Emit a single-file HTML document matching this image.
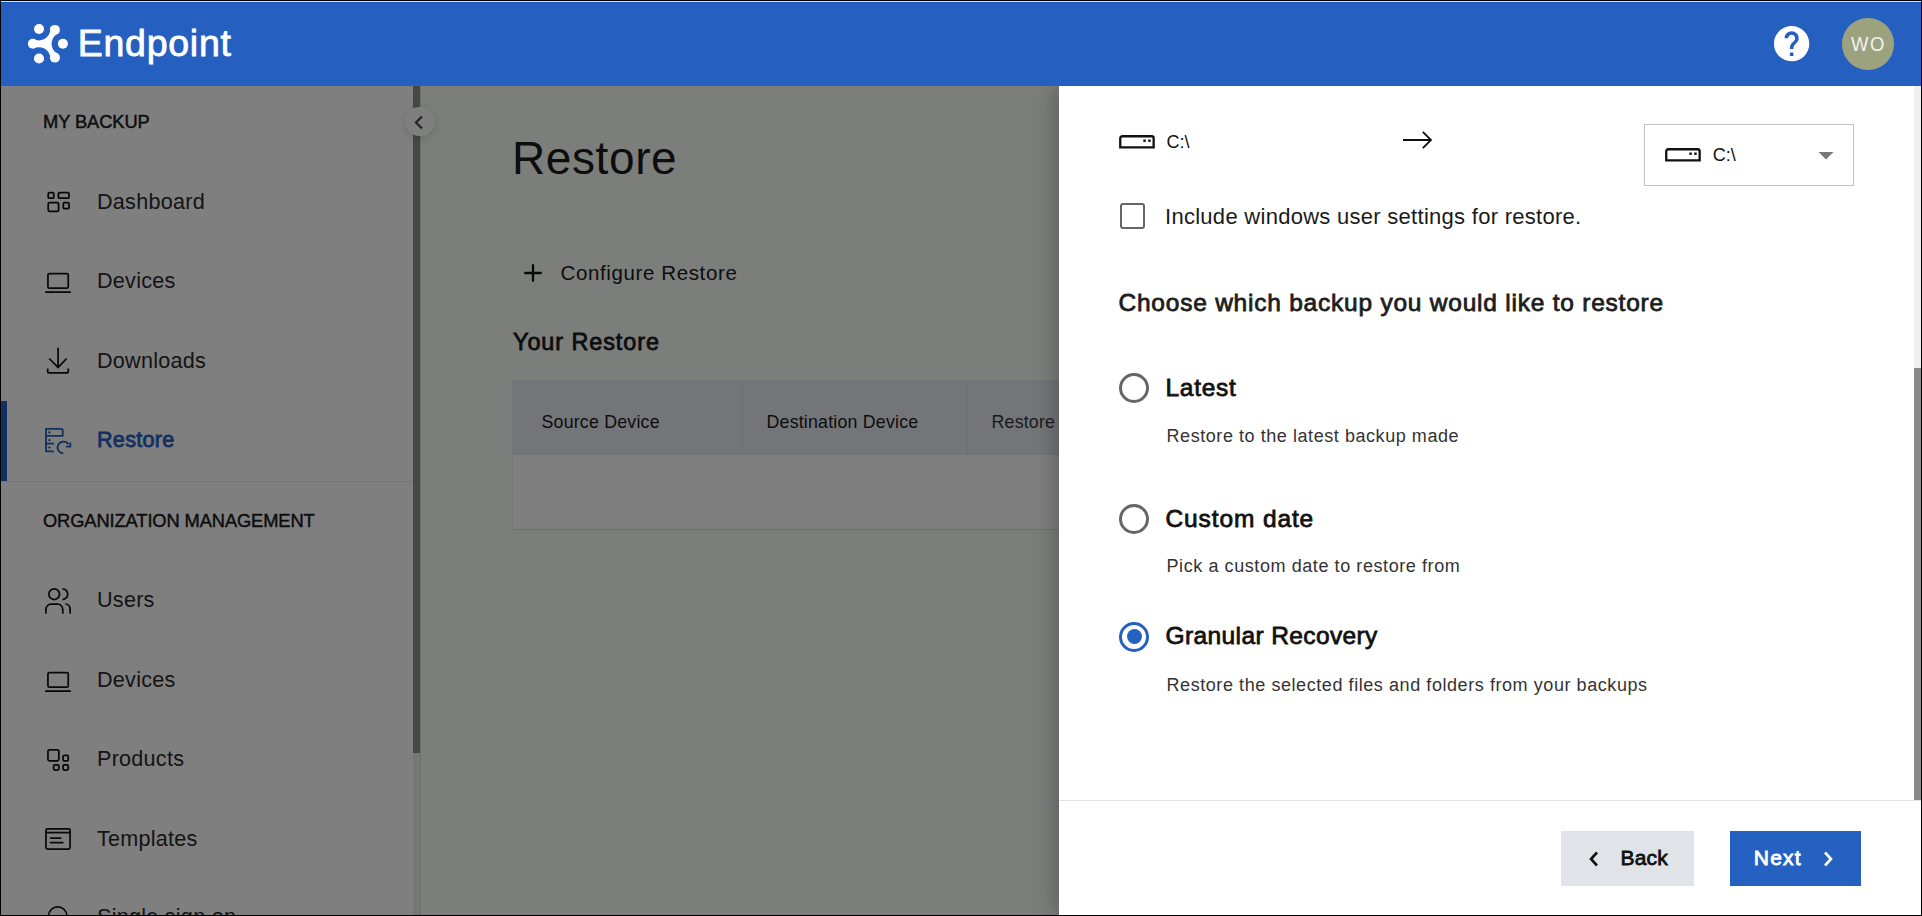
<!DOCTYPE html>
<html><head><meta charset="utf-8"><style>
html,body{margin:0;padding:0;}
body{width:1922px;height:916px;overflow:hidden;position:relative;background:#000;font-family:'Liberation Sans',sans-serif;}
.t{position:absolute;line-height:1;white-space:nowrap;}
.a{position:absolute;}
svg{position:absolute;overflow:visible;}
</style></head><body>
<div class="a" style="left:1px;top:1px;width:1920px;height:914px;background:#fff;overflow:hidden"></div>
<!-- base page (under overlay) -->
<div class="a" style="left:1px;top:86px;width:1058px;height:829px;background:#f8fcf8"></div>
<div class="a" style="left:1px;top:86px;width:412px;height:829px;background:#fff"></div>
<div class="a" style="left:1px;top:481px;width:412px;height:1px;background:#e8e8e8"></div>
<div class="a" style="left:1px;top:401px;width:6px;height:80px;background:#2660c2"></div>
<div class="a" style="left:413px;top:86px;width:7px;height:829px;background:#eaf0ec"></div>
<div class="a" style="left:420px;top:86px;width:1px;height:829px;background:#dde1dd"></div>
<div class="a" style="left:413px;top:86px;width:7px;height:667px;background:#8e8e8e"></div>
<!-- table -->
<div class="a" style="left:512px;top:380px;width:560px;height:75px;background:#e6ebf2"></div>
<div class="a" style="left:742px;top:380px;width:1px;height:75px;background:#dde2e9"></div>
<div class="a" style="left:967px;top:380px;width:1px;height:75px;background:#dde2e9"></div>
<div class="a" style="left:512px;top:455px;width:560px;height:74px;background:#fff;box-shadow:inset 1px 0 0 #f0f0f0"></div>
<div class="a" style="left:512px;top:529px;width:560px;height:1px;background:#dcdcdc"></div>
<!-- plus -->
<svg width="20" height="20" style="left:523px;top:263px">
  <path d="M10 2.2v15.6M2.2 10h15.6" stroke="#111" stroke-width="2.3" stroke-linecap="round"/>
</svg>
<!-- sidebar icons -->
<svg width="36" height="36" style="left:40px;top:184px" fill="none" stroke="#111" stroke-width="1.75">
  <rect x="8.2" y="8.6" width="5.6" height="5.6" rx="1.3"/>
  <rect x="18.4" y="8.6" width="10.6" height="5.6" rx="1.3"/>
  <rect x="8.2" y="18.6" width="10.4" height="8.8" rx="1.3"/>
  <rect x="23.3" y="18.6" width="5.7" height="6.1" rx="1.3"/>
</svg>
<svg width="36" height="36" style="left:40px;top:264px" fill="none" stroke="#111" stroke-width="1.75">
  <rect x="7.95" y="9.65" width="20.3" height="14.5" rx="1.4"/>
  <path d="M5.1 28.1H30.9"/>
</svg>
<svg width="36" height="36" style="left:40px;top:343px" fill="none" stroke="#111" stroke-width="1.75">
  <path d="M18.1 4.7V24M9.2 15.5l8.9 8.9 8.6-8.9M7.7 25.4v2.8a1.7 1.7 0 0 0 1.7 1.7h17.2a1.7 1.7 0 0 0 1.7-1.7v-2.8"/>
</svg>
<svg width="36" height="36" style="left:40px;top:422px" fill="none" stroke="#2660c2" stroke-width="1.8">
  <path d="M6 30.3V6.8h15.2a1.5 1.5 0 0 1 1.5 1.5v5.5H6M6 21.6h8M6 29.4h8"/>
  <path d="M8.2 10.4h2.4M9.4 9.2v2.4M8.2 18.1h2.4M9.4 16.9v2.4M8.2 25.5h2.4M9.4 24.3v2.4" stroke-width="1.1"/>
  <path d="M23.3 31.4A5.9 5.9 0 1 1 28.4 22.3M30.3 20.4v4.2h-4.4"/>
</svg>
<svg width="36" height="36" style="left:40px;top:583px" fill="none" stroke="#111" stroke-width="1.75">
  <circle cx="14.2" cy="11.2" r="5.3"/>
  <path d="M5.9 30.7v-4.2a5.2 5.2 0 0 1 5.2-5.3h6.5a5.2 5.2 0 0 1 5.2 5.3v4.2M22.4 5.9a5.3 5.3 0 0 1 0 10.6M25.4 21a5 5 0 0 1 4.7 5v4.7"/>
</svg>
<svg width="36" height="36" style="left:40px;top:663px" fill="none" stroke="#111" stroke-width="1.75">
  <rect x="7.95" y="9.65" width="20.3" height="14.5" rx="1.4"/>
  <path d="M5.1 28.1H30.9"/>
</svg>
<svg width="36" height="36" style="left:40px;top:742px" fill="none" stroke="#111" stroke-width="1.75">
  <rect x="7.95" y="7.75" width="10.9" height="11.1" rx="1.5"/>
  <rect x="23.05" y="13.45" width="5.2" height="5.4" rx="1.2"/>
  <rect x="13.65" y="22.85" width="5.2" height="5.2" rx="1.2"/>
  <rect x="23.05" y="22.85" width="5.2" height="5.2" rx="1.2"/>
</svg>
<svg width="36" height="36" style="left:40px;top:821px" fill="none" stroke="#111" stroke-width="1.75">
  <rect x="5.95" y="7.75" width="24.1" height="20.3" rx="1.5"/>
  <path d="M5.95 11.6H30.05"/>
  <path d="M10.6 17.1h10.2M10.6 21.6h12.2" stroke-linecap="round"/>
</svg>
<svg width="36" height="36" style="left:40px;top:900px" fill="none" stroke="#111" stroke-width="1.75">
  <path d="M8.5 16a9.2 9.2 0 0 1 18.4 0"/>
</svg>
<div class="t" style="left:43.0px;top:112.8px;font-size:18.30px;font-weight:400;color:#1a1a1a;letter-spacing:-0.07px;-webkit-text-stroke:0.45px #1a1a1a;">MY BACKUP</div><div class="t" style="left:43.0px;top:511.9px;font-size:18.30px;font-weight:400;color:#1a1a1a;letter-spacing:-0.1px;-webkit-text-stroke:0.45px #1a1a1a;">ORGANIZATION MANAGEMENT</div><div class="t" style="left:97.0px;top:191.0px;font-size:21.60px;font-weight:400;color:#2a2a2a;letter-spacing:0.25px;">Dashboard</div><div class="t" style="left:97.0px;top:270.2px;font-size:21.60px;font-weight:400;color:#2a2a2a;letter-spacing:0.25px;">Devices</div><div class="t" style="left:97.0px;top:350.0px;font-size:21.60px;font-weight:400;color:#2a2a2a;letter-spacing:0.25px;">Downloads</div><div class="t" style="left:97.0px;top:429.0px;font-size:21.60px;font-weight:400;color:#2660c2;letter-spacing:0.27px;-webkit-text-stroke:0.8px #2660c2;">Restore</div><div class="t" style="left:97.0px;top:589.1px;font-size:21.60px;font-weight:400;color:#2a2a2a;letter-spacing:0.25px;">Users</div><div class="t" style="left:97.0px;top:669.1px;font-size:21.60px;font-weight:400;color:#2a2a2a;letter-spacing:0.25px;">Devices</div><div class="t" style="left:97.0px;top:748.2px;font-size:21.60px;font-weight:400;color:#2a2a2a;letter-spacing:0.25px;">Products</div><div class="t" style="left:97.0px;top:828.2px;font-size:21.60px;font-weight:400;color:#2a2a2a;letter-spacing:0.25px;">Templates</div><div class="t" style="left:97.0px;top:906.2px;font-size:21.60px;font-weight:400;color:#2a2a2a;letter-spacing:0.25px;">Single sign on</div><div class="t" style="left:512.0px;top:135.4px;font-size:46.00px;font-weight:400;color:#1a1a1a;letter-spacing:0.6px;">Restore</div><div class="t" style="left:560.5px;top:262.6px;font-size:20.50px;font-weight:400;color:#1a1a1a;letter-spacing:0.62px;">Configure Restore</div><div class="t" style="left:513.0px;top:330.7px;font-size:23.40px;font-weight:400;color:#1a1a1a;letter-spacing:0.94px;-webkit-text-stroke:0.8px #1a1a1a;">Your Restore</div><div class="t" style="left:541.5px;top:413.9px;font-size:17.80px;font-weight:400;color:#1a1a1a;letter-spacing:0.2px;">Source Device</div><div class="t" style="left:766.5px;top:413.9px;font-size:17.80px;font-weight:400;color:#1a1a1a;letter-spacing:0.2px;">Destination Device</div>
<!-- collapse button -->
<div class="a" style="left:405.2px;top:106.8px;width:29.4px;height:29.4px;border-radius:50%;background:#fff;box-shadow:0 2px 8px rgba(0,0,0,.15)"></div>
<svg width="12" height="16" style="left:413px;top:113.5px">
  <path d="M9 2.5L3 8.5l6 6" fill="none" stroke="#444" stroke-width="2.2"/>
</svg>

<!-- overlay -->
<div class="a" style="left:1px;top:86px;width:1920px;height:829px;background:rgba(0,0,0,.5)"></div>

<!-- drawer -->
<div class="a" style="left:1059px;top:86px;width:862px;height:829px;background:#fff;box-shadow:-4px 0 20px rgba(0,0,0,.26)"></div>
<div class="a" style="left:1914px;top:86px;width:7px;height:714px;background:#efefef"></div>
<div class="a" style="left:1914px;top:368px;width:7px;height:432px;background:#8a8a8a"></div>
<div class="a" style="left:1059px;top:800px;width:862px;height:1px;background:#e1e4e9"></div>
<!-- drive icons -->
<svg width="40" height="20" style="left:1117px;top:132px">
  <path d="M3.25 15.45V6.25a2 2 0 0 1 2-2h29.4a2 2 0 0 1 2 2v9.2z" fill="none" stroke="#111" stroke-width="2.3"/>
  <rect x="26.3" y="7.5" width="2.5" height="2.4" fill="#111"/><rect x="31.2" y="7.5" width="2.5" height="2.4" fill="#111"/>
</svg>
<svg width="40" height="20" style="left:1663px;top:144.9px">
  <path d="M3.25 15.45V6.25a2 2 0 0 1 2-2h29.4a2 2 0 0 1 2 2v9.2z" fill="none" stroke="#111" stroke-width="2.3"/>
  <rect x="26.3" y="7.5" width="2.5" height="2.4" fill="#111"/><rect x="31.2" y="7.5" width="2.5" height="2.4" fill="#111"/>
</svg>
<!-- arrow -->
<svg width="34" height="20" style="left:1401px;top:130px">
  <path d="M2 10h28M21.8 1.8L30 10l-8.2 8.2" fill="none" stroke="#111" stroke-width="1.8"/>
</svg>
<!-- dropdown -->
<div class="a" style="left:1644px;top:124px;width:208px;height:60px;border:1px solid #c4c4c4"></div>
<svg width="16" height="10" style="left:1818px;top:151px"><path d="M0.5 1h15L8 8.5z" fill="#777"/></svg>
<!-- checkbox -->
<div class="a" style="left:1120.1px;top:203.3px;width:21.4px;height:21.4px;border:2.7px solid #666;border-radius:3px"></div>
<!-- radios -->
<div class="a" style="left:1119.2px;top:373.2px;width:24px;height:24px;border:3px solid #666;border-radius:50%"></div>
<div class="a" style="left:1119.2px;top:503.8px;width:24px;height:24px;border:3px solid #666;border-radius:50%"></div>
<div class="a" style="left:1119.2px;top:622px;width:24px;height:24px;border:3px solid #2561c0;border-radius:50%"></div>
<div class="a" style="left:1126.6px;top:629.4px;width:15px;height:15px;background:#2561c0;border-radius:50%"></div>
<!-- buttons -->
<div class="a" style="left:1561px;top:831px;width:133px;height:55px;background:#e0e3e8"></div>
<div class="a" style="left:1730px;top:831px;width:131px;height:55px;background:#2561c0"></div>
<svg width="14" height="18" style="left:1587px;top:850px"><path d="M10 2.5l-6 6.5 6 6.5" fill="none" stroke="#111" stroke-width="2.6"/></svg>
<svg width="14" height="18" style="left:1821px;top:850px"><path d="M4 2.5l6 6.5-6 6.5" fill="none" stroke="#fff" stroke-width="2.6"/></svg>
<div class="t" style="left:991.5px;top:413.9px;font-size:17.80px;font-weight:400;color:#1a1a1a;letter-spacing:0.2px;">Restore</div><div class="t" style="left:1166.5px;top:132.5px;font-size:18.00px;font-weight:400;color:#111;letter-spacing:0px;">C:\</div><div class="t" style="left:1712.7px;top:145.7px;font-size:18.00px;font-weight:400;color:#111;letter-spacing:0px;">C:\</div><div class="t" style="left:1165.0px;top:206.1px;font-size:22.00px;font-weight:400;color:#1a1a1a;letter-spacing:0.28px;">Include windows user settings for restore.</div><div class="t" style="left:1118.5px;top:290.7px;font-size:24.50px;font-weight:400;color:#1d1d1d;letter-spacing:0.77px;-webkit-text-stroke:0.8px #1d1d1d;">Choose which backup you would like to restore</div><div class="t" style="left:1165.5px;top:375.7px;font-size:24.50px;font-weight:400;color:#111;letter-spacing:0.69px;-webkit-text-stroke:0.8px #111;">Latest</div><div class="t" style="left:1166.5px;top:427.0px;font-size:18.00px;font-weight:400;color:#333;letter-spacing:0.56px;">Restore to the latest backup made</div><div class="t" style="left:1165.5px;top:507.1px;font-size:24.50px;font-weight:400;color:#111;letter-spacing:0.88px;-webkit-text-stroke:0.8px #111;">Custom date</div><div class="t" style="left:1166.5px;top:556.8px;font-size:18.00px;font-weight:400;color:#333;letter-spacing:0.58px;">Pick a custom date to restore from</div><div class="t" style="left:1165.5px;top:624.4px;font-size:24.50px;font-weight:400;color:#111;letter-spacing:0.39px;-webkit-text-stroke:0.8px #111;">Granular Recovery</div><div class="t" style="left:1166.5px;top:676.4px;font-size:18.00px;font-weight:400;color:#333;letter-spacing:0.57px;">Restore the selected files and folders from your backups</div><div class="t" style="left:1620.5px;top:847.4px;font-size:21.00px;font-weight:400;color:#111;letter-spacing:0.15px;-webkit-text-stroke:0.8px #111;">Back</div><div class="t" style="left:1753.8px;top:847.4px;font-size:21.00px;font-weight:400;color:#fff;letter-spacing:1.17px;-webkit-text-stroke:0.8px #fff;">Next</div>
<!-- header -->
<div class="a" style="left:1px;top:1px;width:1920px;height:85px;background:#2560c0"></div>
<div class="a" style="left:1px;top:1px;width:1920px;height:1px;background:#dcdfe4"></div>
<div class="a" style="left:1px;top:2px;width:1920px;height:1px;background:#1c56bb"></div>
<svg width="80" height="80" style="left:0;top:0">
  <polygon points="30.9,43.8 55.9,28 55.9,59.5" fill="#fff"/>
  <circle cx="39" cy="29.1" r="11.3" fill="#2560c0"/>
  <circle cx="62.9" cy="43.8" r="11.3" fill="#2560c0"/>
  <circle cx="39" cy="58.5" r="11.3" fill="#2560c0"/>
  <g fill="#fff">
  <circle cx="39" cy="29" r="5"/><circle cx="54.9" cy="29.9" r="5"/>
  <circle cx="32.9" cy="43.8" r="5"/><circle cx="62.9" cy="43.8" r="5"/>
  <circle cx="39" cy="58.5" r="5"/><circle cx="54.9" cy="57.6" r="5"/>
  </g>
</svg>
<svg width="36" height="36" viewBox="2 2 20 20" style="left:1773.5px;top:26.4px;width:35.3px;height:35.3px">
  <path fill="#fff" d="M12 2C6.48 2 2 6.48 2 12s4.48 10 10 10 10-4.48 10-10S17.52 2 12 2zm1 17h-2v-2h2v2zm2.07-7.75l-.9.92C13.45 12.9 13 13.5 13 15h-2v-.5c0-1.1.45-2.1 1.17-2.83l1.24-1.26c.37-.36.59-.86.59-1.41 0-1.1-.9-2-2-2s-2 .9-2 2H8c0-2.21 1.79-4 4-4s4 1.79 4 4c0 .88-.36 1.68-.93 2.25z"/>
</svg>
<div class="a" style="left:1842.2px;top:18.2px;width:51.5px;height:51.5px;border-radius:50%;background:#9ca27e"></div>

<div class="t" style="left:77.8px;top:24.5px;font-size:37.50px;font-weight:400;color:#fff;letter-spacing:0.72px;-webkit-text-stroke:0.8px #fff;">Endpoint</div>
<div class="t" style="left:1850.6px;top:33.8px;font-size:20.50px;font-weight:400;color:#f2f3ee;letter-spacing:0px;transform:scaleX(0.9);transform-origin:0 0;">W</div><div class="t" style="left:1869.6px;top:33.8px;font-size:20.50px;font-weight:400;color:#f2f3ee;letter-spacing:0px;transform:scaleX(0.9);transform-origin:0 0;">O</div>
<!-- outer border -->
<div class="a" style="left:0;top:0;width:1920px;height:914px;border:1px solid #000;pointer-events:none"></div>
</body></html>
